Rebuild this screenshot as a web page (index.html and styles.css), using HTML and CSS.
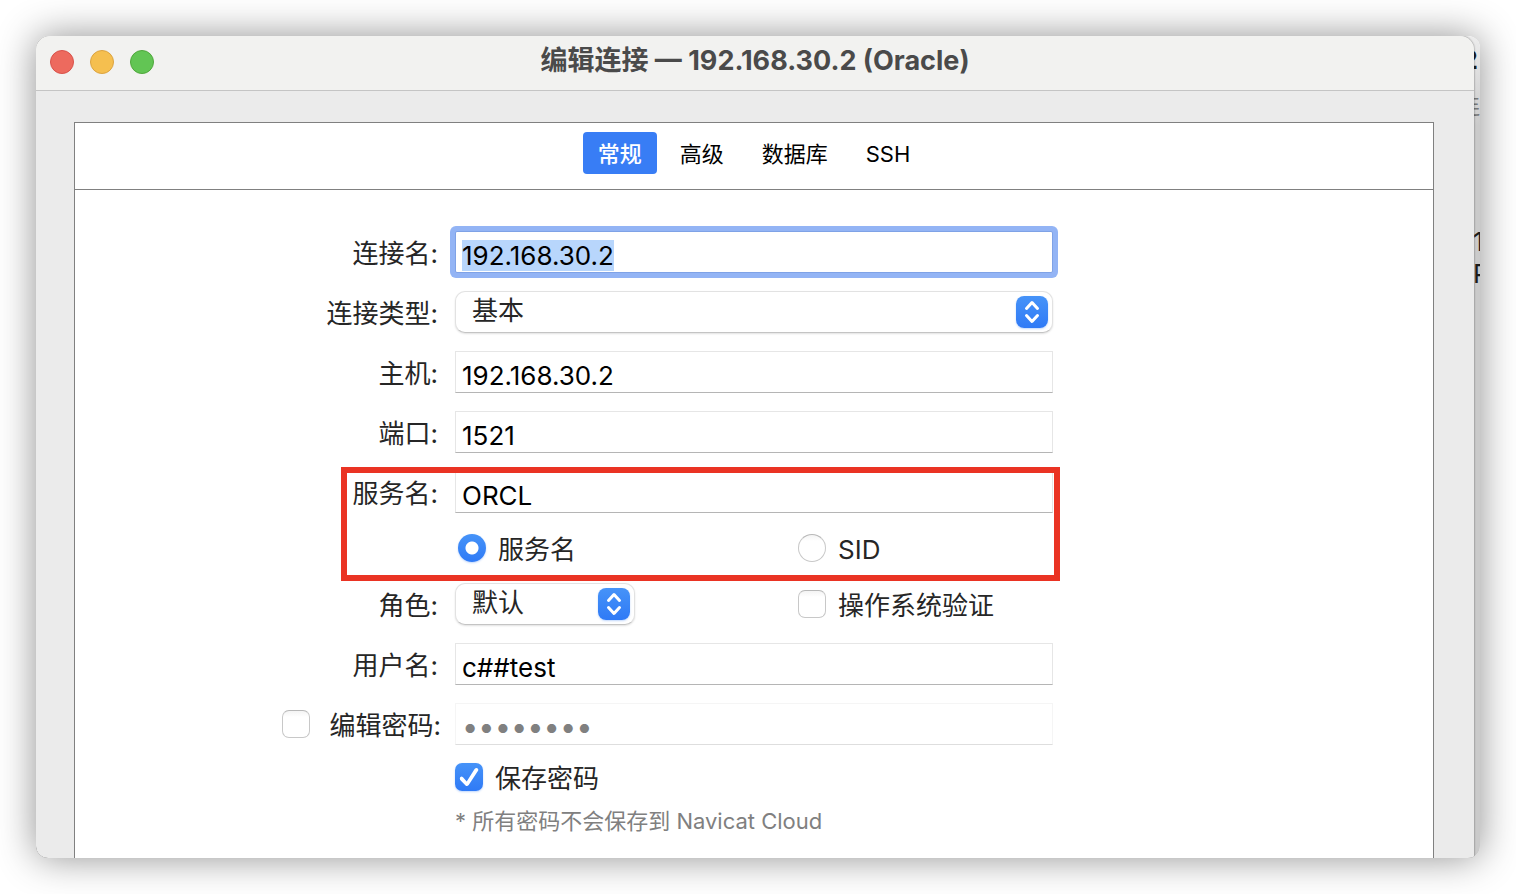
FILE: index.html
```html
<!DOCTYPE html>
<html lang="zh-CN">
<head>
  <meta charset="UTF-8">
  <meta name="viewport" content="width=device-width, initial-scale=1.0">
  <title>编辑连接 — 192.168.30.2 (Oracle)</title>
  <link rel="stylesheet" href="styles.css">
</head>
<body>
  <div class="desktop">
    <!-- edge of the main window that sits behind the dialog -->
    <div class="behind" aria-hidden="true">
      <span class="behind-title">2</span>
      <span class="behind-sub">连</span>
      <span class="behind-item">1</span>
      <span class="behind-item behind-item-last">P</span>
    </div>

    <main class="window">
      <header class="titlebar">
        <div class="lights">
          <button class="light light-close" type="button" aria-label="关闭"></button>
          <button class="light light-min" type="button" aria-label="最小化"></button>
          <button class="light light-zoom" type="button" aria-label="缩放"></button>
        </div>
        <h1>编辑连接 — 192.168.30.2 (Oracle)</h1>
      </header>

      <div class="panel">
        <nav class="tabs">
          <button class="tab active" type="button">常规</button>
          <button class="tab" type="button">高级</button>
          <button class="tab" type="button">数据库</button>
          <button class="tab" type="button">SSH</button>
        </nav>

        <form class="form">
          <div class="row">
            <label class="label" for="name">连接名:</label>
            <input class="text focused" type="text" id="name" value="192.168.30.2" autofocus>
          </div>

          <div class="row">
            <label class="label" for="type">连接类型:</label>
            <div class="select">
              <select id="type"><option>基本</option></select>
              <svg class="arrows" viewBox="0 0 32 32"><path d="M10.500 12.500 16 6.500l5.500 6M10.500 19.500l5.500 6 5.500-6"/></svg>
            </div>
          </div>

          <div class="row">
            <label class="label" for="host">主机:</label>
            <input class="text" type="text" id="host" value="192.168.30.2">
          </div>

          <div class="row">
            <label class="label" for="port">端口:</label>
            <input class="text" type="text" id="port" value="1521">
          </div>

          <div class="marked">
            <div class="row">
              <label class="label" for="service">服务名:</label>
              <input class="text" type="text" id="service" value="ORCL">
            </div>
            <div class="row">
              <div class="pair pair-radio">
                <label class="option"><input type="radio" name="kind" checked><span>服务名</span></label>
                <label class="option"><input type="radio" name="kind"><span>SID</span></label>
              </div>
            </div>
          </div>

          <div class="row">
            <label class="label" for="role">角色:</label>
            <div class="pair">
              <div class="select select-small">
                <select id="role"><option>默认</option></select>
                <svg class="arrows" viewBox="0 0 32 32"><path d="M10.500 12.500 16 6.500l5.500 6M10.500 19.500l5.500 6 5.500-6"/></svg>
              </div>
              <label class="option"><input type="checkbox"><span>操作系统验证</span></label>
            </div>
          </div>

          <div class="row">
            <label class="label" for="user">用户名:</label>
            <input class="text" type="text" id="user" value="c##test">
          </div>

          <div class="row row-password">
            <label class="option option-edit"><input type="checkbox"><span>编辑密码:</span></label>
            <input class="text" type="password" aria-label="密码" value="password" disabled>
          </div>

          <div class="row">
            <label class="option option-save"><input type="checkbox" checked><span>保存密码</span></label>
          </div>

          <div class="row">
            <p class="note">* 所有密码不会保存到 Navicat Cloud</p>
          </div>
        </form>
      </div>
    </main>
  </div>

  <script>
    const nameInput = document.getElementById('name');
    nameInput.focus();
    nameInput.select();
  </script>
</body>
</html>
```
FILE: styles.css
```css
*, *::before, *::after {
  box-sizing: border-box;
}
body {
  margin: 0;
  padding: 36px;
  background: #fff;
  color: #262626;
  font-family: Inter, "Noto Sans CJK SC", sans-serif;
  font-size: 26px;
  line-height: 34px;
}
input, select, button {
  font: inherit;
  color: inherit;
  margin: 0;
}

.desktop {
  position: relative;
  padding-right: 6px;
  border-radius: 12px;
  overflow: hidden;
  background: linear-gradient(#ececec, #cacaca 90px);
  box-shadow: 0 0 38px rgba(0, 0, 0, 0.44);
}
.behind {
  position: absolute;
  top: 0;
  right: 0;
  bottom: 0;
  width: 6px;
  overflow: hidden;
  color: #1c1c1c;
}
.behind span {
  position: absolute;
  left: 0;
}
.behind .behind-title {
  top: 7px;
  left: auto;
  right: 2px;
  font-weight: 700;
}
.behind .behind-sub {
  top: 53px;
  left: auto;
  right: 0;
  font-size: 22px;
  color: #777;
}
.behind .behind-item {
  top: 189px;
  left: -1px;
  font-size: 26px;
}
.behind .behind-item-last {
  top: 221px;
}

.window {
  position: relative;
  border-radius: 14px 14px 0 12px;
  overflow: hidden;
  background: #ebebeb;
  box-shadow: 0 0 2px rgba(0, 0, 0, 0.6);
}
.titlebar {
  position: relative;
  padding: 8px 0 12px;
  background: #f2f2f0;
  border-bottom: 1px solid #c4c4c4;
}
.titlebar h1 {
  margin: 0;
  font-size: 27px;
  font-weight: 700;
  line-height: 34px;
  text-align: center;
  color: #4a4a4a;
}
.lights {
  position: absolute;
  top: 14px;
  left: 14px;
  display: flex;
  gap: 16px;
}
.light {
  width: 24px;
  height: 24px;
  padding: 0;
  border: 1px solid;
  border-radius: 50%;
}
.light-close {
  background: #ed6a5e;
  border-color: #d8524a;
}
.light-min {
  background: #f5bf4f;
  border-color: #dba340;
}
.light-zoom {
  background: #62c554;
  border-color: #50a73c;
}

.panel {
  margin: 31px 40px 0 38px;
  background: #fff;
  border: 1px solid #808080;
  border-bottom: 0;
}
.tabs {
  display: flex;
  justify-content: center;
  gap: 8px;
  padding: 9px 0 15px;
  border-bottom: 1px solid #808080;
}
.tab {
  height: 42px;
  padding: 2px 15px 0;
  border: 0;
  border-radius: 4px;
  background: none;
  color: #000;
  font-size: 22px;
  line-height: 40px;
}
.tab.active {
  background: #387df5;
  color: #fff;
  font-weight: 500;
}

.form {
  display: grid;
  gap: 18px;
  padding: 41px 0 25px;
}
.row {
  display: grid;
  grid-template-columns: 1fr minmax(0, 598px) 1fr;
  column-gap: 17px;
}
.row > :not(.label):not(.option-edit) {
  grid-column: 2;
}
.label {
  padding-top: 6px;
  text-align: right;
}
.text {
  width: 100%;
  height: 42px;
  padding: 6px 6px 0;
  border: 1px solid #e6e6e6;
  border-bottom-color: #b5b5b5;
  border-radius: 0;
  background: #fff;
  color: #000;
  outline: 0;
}
.text.focused {
  border-color: #7fa2e6;
  border-radius: 2px;
  box-shadow: 0 0 0 5px #93b4f5;
}
.text::selection {
  background: #b8d6fc;
  color: #000;
}
.text:disabled {
  border-color: #f5f5f5;
  border-bottom-color: #dedede;
  color: #808080;
}
.text[type="password"] {
  padding-top: 4px;
  font-size: 29px;
}

.select {
  position: relative;
}
.select-small {
  width: 180px;
}
.select select {
  display: block;
  width: 100%;
  height: 42px;
  padding: 0 44px 2px 16px;
  border: 1px solid #e2e2e2;
  border-bottom-color: #c4c4c4;
  border-radius: 10px;
  appearance: none;
  background: #fff;
  box-shadow: 0 1px 2px rgba(0, 0, 0, 0.12);
}
.arrows {
  position: absolute;
  top: 5px;
  right: 5px;
  width: 32px;
  height: 32px;
  border-radius: 8px;
  background: linear-gradient(#4693f8, #2f7af6);
  box-shadow: 0 1px 2px rgba(47, 122, 246, 0.3);
  fill: none;
  stroke: #fff;
  stroke-width: 3;
  stroke-linecap: round;
  stroke-linejoin: round;
  pointer-events: none;
}

.pair {
  display: grid;
  grid-template-columns: 343px 1fr;
  align-items: center;
}
.pair-radio {
  grid-template-columns: 340px 1fr;
  padding-left: 3px;
}
.option {
  display: flex;
  align-items: center;
  gap: 12px;
}
.option span {
  padding-top: 4px;
  line-height: 30px;
}
.option input {
  flex: none;
  width: 28px;
  height: 28px;
  appearance: none;
  border: 1px solid #c8c8c8;
  border-top-color: #b8b8b8;
  border-radius: 7px;
  background: linear-gradient(#f4f4f4, #fff 6px);
}
.option input[type="radio"] {
  border-radius: 50%;
}
.option input:checked {
  border: 0;
  background: linear-gradient(#4693f8, #2f7af6);
  box-shadow: 0 1px 2px rgba(47, 122, 246, 0.3);
}
.option input[type="radio"]:checked {
  background: radial-gradient(circle, #fff 6px, transparent 7px), linear-gradient(#4693f8, #2f7af6);
}
.option input[type="checkbox"]:checked {
  position: relative;
}
.option input[type="checkbox"]:checked::after {
  content: "";
  position: absolute;
  inset: 0;
  background: #fff;
  clip-path: path("M4.800 15.600Q4.800 13.600 6.800 13.600L8 14.200 11.700 18.400 19.600 6Q21.400 4.200 23.200 6L23.200 7.600 13.700 22Q12 24 10.300 22.200L5.200 17Z");
}
.option-edit {
  justify-content: flex-end;
  gap: 20px;
}
.row-password {
  column-gap: 14px;
}
.option-save {
  height: 28px;
}

/* red frame round the service name settings */
.marked {
  position: relative;
  display: grid;
  gap: 18px;
}
.marked::after {
  content: "";
  position: absolute;
  top: -4px;
  bottom: -16px;
  left: calc(50% - 413px);
  width: 719px;
  border: 6px solid #ea3323;
  pointer-events: none;
}

.note {
  margin: 0;
  font-size: 22px;
  line-height: 24px;
  color: #808080;
}
```
